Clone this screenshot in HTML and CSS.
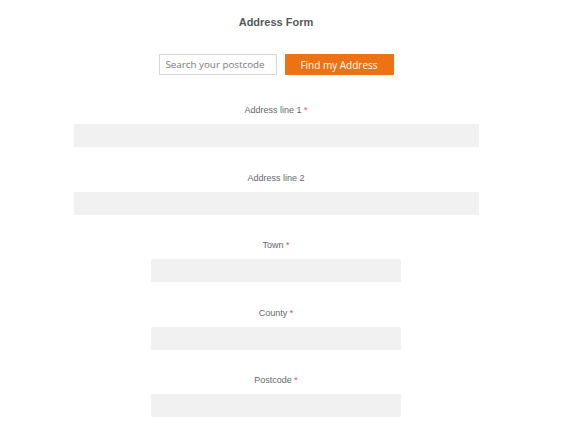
FILE: index.html
```html
<!DOCTYPE html>
<html>
<head>
<meta charset="utf-8">
<link rel="stylesheet" href="styles.css">
</head>
<body>
<div class="page">
  <h1 class="title">Address Form</h1>
  <div class="search-row">
    <input class="search" type="text" placeholder="Search your postcode">
    <button class="find-btn">Find my Address</button>
  </div>
  <div class="fields">
    <div class="field wide">
      <label class="label">Address line 1 <span class="req">*</span></label>
      <div class="input"></div>
    </div>
    <div class="field wide">
      <label class="label">Address line 2</label>
      <div class="input"></div>
    </div>
    <div class="field narrow">
      <label class="label">Town <span class="req">*</span></label>
      <div class="input"></div>
    </div>
    <div class="field narrow">
      <label class="label">County <span class="req">*</span></label>
      <div class="input"></div>
    </div>
    <div class="field narrow">
      <label class="label">Postcode <span class="req">*</span></label>
      <div class="input"></div>
    </div>
  </div>
</div>
</body>
</html>
```
FILE: styles.css
```css
html, body {
  margin: 0;
  padding: 0;
  background: #ffffff;
}
.page {
  width: 552px;
  display: flex;
  flex-direction: column;
  align-items: center;
  font-family: "Liberation Sans", Arial, sans-serif;
}
.title {
  margin: 15px 0 0;
  font-size: 11px;
  line-height: 14px;
  font-weight: bold;
  color: #545a5a;
}
.search-row {
  margin-top: 25px;
  display: flex;
  gap: 8px;
  height: 21px;
}
.search {
  box-sizing: border-box;
  width: 118px;
  height: 21px;
  border: 1px solid #d6d6d6;
  padding: 0 6px;
  font-family: "Open Sans", sans-serif;
  font-size: 9.8px;
  color: #777;
  outline: none;
}
.search::placeholder {
  color: #7a7a7a;
}
.find-btn {
  box-sizing: border-box;
  width: 109px;
  height: 21px;
  border: none;
  border-radius: 1px;
  background: #ec7213;
  color: #ffffff;
  font-family: "Open Sans", sans-serif;
  font-size: 10px;
  padding: 0;
}
.fields {
  margin-top: 29px;
  display: flex;
  flex-direction: column;
  align-items: center;
  gap: 24.5px;
}
.field {
  display: flex;
  flex-direction: column;
  align-items: center;
  gap: 8px;
}
.label {
  font-size: 9px;
  line-height: 12px;
  color: #62686a;
}
.req {
  color: #e8484a;
}
.input {
  height: 23px;
  background: #f1f1f1;
  border-radius: 1px;
}
.wide .input {
  width: 405px;
}
.narrow .input {
  width: 250px;
}
```
